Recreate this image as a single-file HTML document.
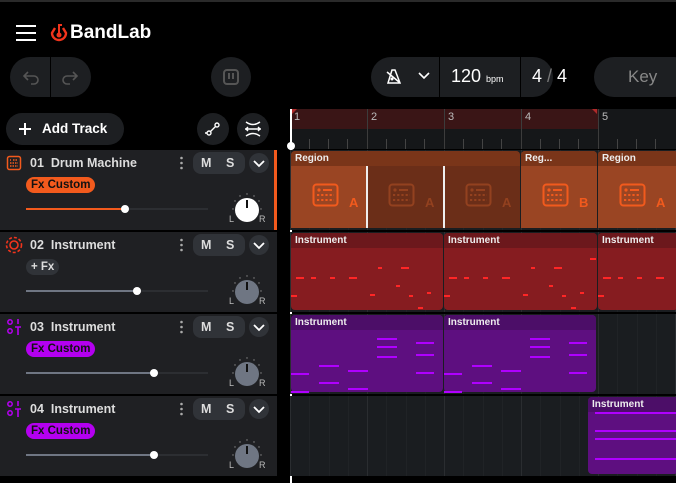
<!DOCTYPE html>
<html><head><meta charset="utf-8"><style>
*{box-sizing:border-box;margin:0;padding:0}
body{width:676px;height:483px;background:#000;position:relative;overflow:hidden;font-family:"Liberation Sans",sans-serif;color:#e8e8ea}
.a{position:absolute}
.pill{background:#1d1f22;border-radius:20px}
.trk{position:absolute;left:0;width:277px;height:80px;background:#1f2023}
.nm{position:absolute;left:30px;top:6px;font-size:12.5px;font-weight:bold;color:#ddd}
.dots{position:absolute;left:180px;top:6px;width:3px;height:14px}
.ms{position:absolute;left:193px;top:2px;width:52px;height:22px;background:#303338;border-radius:8px;font-size:12.5px;font-weight:bold;color:#ddd}
.ms span{position:absolute;top:4px}
.chev{position:absolute;left:249px;top:3px;width:20px;height:20px;border-radius:50%;background:#303338}
.badge{position:absolute;left:26px;top:27px;height:16px;border-radius:8px;padding:0 5px;font-size:11.5px;font-weight:bold;line-height:16px;color:#111}
.sl{position:absolute;left:26px;top:58px;width:182px;height:2px;background:#2c2e32}
.knob{position:absolute;left:235px;top:48px;width:24px;height:24px;border-radius:50%}
.knob:after{content:"";position:absolute;left:11px;top:2px;width:2px;height:8px;background:#111}
.lr{position:absolute;top:64px;font-size:9px;color:#bbb}
.grid{position:absolute;left:291px;width:385px;height:80px;background:#1a1d20}
.reg{position:absolute;border-radius:4px;overflow:hidden}
.rh{position:absolute;left:0;right:0;top:0;height:15px;font-size:10px;font-weight:bold;color:#eee;padding:2px 4px}
.n{position:absolute;height:2px}
</style></head><body>
<div class="a" style="left:0;top:0;width:676px;height:2px;background:#2a2a2a"></div>
<div class="a" style="left:16px;top:25px;width:20px;height:2px;background:#fff"></div>
<div class="a" style="left:16px;top:32px;width:20px;height:2px;background:#fff"></div>
<div class="a" style="left:16px;top:39px;width:20px;height:2px;background:#fff"></div>
<svg class="a" style="left:49px;top:22px" width="20" height="22" viewBox="0 0 20 22"><path d="M6 6 L3 11 A7 7 0 0 0 17 11 L14 6" stroke="#f2341c" stroke-width="2.4" fill="none"/><circle cx="10" cy="13" r="2.5" fill="#f2341c"/><path d="M10 13 V3 H13" stroke="#f2341c" stroke-width="2" fill="none"/></svg>
<div class="a" style="left:70px;top:22px;font-size:19px;font-weight:bold;color:#fff">BandLab</div>
<div class="a pill" style="left:10px;top:57px;width:81px;height:40px"></div>
<div class="a" style="left:50px;top:57px;width:1px;height:40px;background:#000"></div>
<svg class="a" style="left:22px;top:68px" width="18" height="18" viewBox="0 0 18 18"><path d="M6 4 L2 8 L6 12 M2 8 H12 A4 4 0 0 1 12 16 H9" stroke="#555" stroke-width="1.6" fill="none"/></svg>
<svg class="a" style="left:61px;top:68px" width="18" height="18" viewBox="0 0 18 18"><path d="M12 4 L16 8 L12 12 M16 8 H6 A4 4 0 0 0 6 16 H9" stroke="#555" stroke-width="1.6" fill="none"/></svg>
<div class="a pill" style="left:211px;top:57px;width:40px;height:40px"></div>
<div class="a" style="left:223px;top:69px;width:16px;height:16px;border:2px solid #555;border-radius:4px"></div>
<div class="a" style="left:228px;top:73px;width:2px;height:6px;background:#555"></div>
<div class="a" style="left:232px;top:73px;width:2px;height:6px;background:#555"></div>
<div class="a pill" style="left:371px;top:57px;width:182px;height:40px"></div>
<div class="a" style="left:439px;top:57px;width:1px;height:40px;background:#000"></div>
<div class="a" style="left:520px;top:57px;width:1px;height:40px;background:#000"></div>
<svg class="a" style="left:385px;top:68px" width="18" height="18" viewBox="0 0 18 18"><path d="M7 2 H10 L15 15 H3 Z M2 4 L14 14" stroke="#fff" stroke-width="1.5" fill="none"/><circle cx="7" cy="11" r="1.5" fill="#fff"/></svg>
<svg class="a" style="left:418px;top:72px" width="12" height="8" viewBox="0 0 12 8"><path d="M1 1 L6 6 L11 1" stroke="#fff" stroke-width="1.6" fill="none"/></svg>
<div class="a" style="left:451px;top:66px;font-size:18px;color:#fff">120 <span style="font-size:9px">bpm</span></div>
<div class="a" style="left:532px;top:66px;font-size:18px;color:#fff">4<span style="color:#777"> / </span>4</div>
<div class="a pill" style="left:594px;top:57px;width:100px;height:40px"></div>
<div class="a" style="left:628px;top:67px;font-size:17px;color:#888">Key</div>
<div class="a pill" style="left:6px;top:113px;width:118px;height:32px;border-radius:16px"></div>
<div class="a" style="left:19px;top:128px;width:12px;height:2px;background:#fff"></div>
<div class="a" style="left:24px;top:123px;width:2px;height:12px;background:#fff"></div>
<div class="a" style="left:42px;top:121px;font-size:13.5px;font-weight:bold;color:#fff">Add Track</div>
<div class="a pill" style="left:197px;top:113px;width:32px;height:32px;border-radius:50%"></div>
<svg class="a" style="left:203px;top:119px" width="20" height="20" viewBox="0 0 20 20"><circle cx="6" cy="14" r="2" stroke="#fff" fill="none" stroke-width="1.4"/><circle cx="14" cy="6" r="2" stroke="#fff" fill="none" stroke-width="1.4"/><path d="M7.5 12.5 L12.5 7.5 M2 14 H4" stroke="#fff" stroke-width="1.4"/></svg>
<div class="a pill" style="left:237px;top:113px;width:32px;height:32px;border-radius:50%"></div>
<svg class="a" style="left:243px;top:119px" width="20" height="20" viewBox="0 0 20 20"><path d="M3 3 Q10 8 17 3 M3 17 Q10 12 17 17 M2 10 H18 M5 8 L3 10 L5 12 M15 8 L17 10 L15 12" stroke="#fff" stroke-width="1.4" fill="none"/></svg>
<div class="a" style="left:291px;top:109px;width:307px;height:20px;background:#3a1516"></div>
<div class="a" style="left:598px;top:109px;width:78px;height:20px;background:#151719"></div>
<div class="a" style="left:291px;top:129px;width:385px;height:20px;background:#151719"></div>
<div class="a" style="left:291px;top:109px;width:0;height:0;border-top:6px solid #b02a2a;border-right:6px solid transparent"></div>
<div class="a" style="left:592px;top:109px;width:0;height:0;border-top:5px solid #b02a2a;border-left:5px solid transparent"></div>
<div id="ruler"></div>
<div class="a" style="left:290px;top:109px;width:2px;height:374px;background:#fff"></div>
<div class="a" style="left:287px;top:142px;width:8px;height:8px;border-radius:50%;background:#fff"></div>
<div class="trk" style="top:150px"></div>
<div class="a" style="left:274px;top:150px;width:3px;height:80px;background:#f25a1d"></div>
<div class="trk" style="top:232px"></div>
<div class="trk" style="top:314px"></div>
<div class="trk" style="top:396px"></div>
<div id="tl"></div>
<div class="grid" style="top:150px"></div>
<div class="grid" style="top:232px"></div>
<div class="grid" style="top:314px"></div>
<div class="grid" style="top:396px"></div>
<div id="gl"></div>
<div id="regs"></div>
<script>
var h='';
for(var b=0;b<5;b++){var x=290+b*77;h+='<div class="a" style="left:'+x+'px;top:109px;width:1px;height:40px;background:#3c3c3c"></div><div class="a" style="left:'+(x+4)+'px;top:111px;font-size:11px;color:#bbb">'+(b+1)+'</div>';for(var t=1;t<4;t++)h+='<div class="a" style="left:'+(x+t*19)+'px;top:139px;width:1px;height:10px;background:#444"></div>';}
document.getElementById('ruler').innerHTML=h;
var g='';for(var i=0;i<21;i++){var x=290+i*19.25;for(var r=0;r<4;r++)g+='<div class="a" style="left:'+Math.round(x)+'px;top:'+(150+r*82)+'px;width:1px;height:80px;background:'+(i%4==0?'#2a2d30':'#202326')+'"></div>';}
document.getElementById('gl').innerHTML=g;
var tr=[{y:150,n:'01&nbsp; Drum Machine',b:'Fx Custom',bc:'#f25a1d',sv:99,sc:'#f25a1d',kc:'#fff',ic:'drum'},{y:232,n:'02&nbsp; Instrument',b:'+ Fx',bc:'#303338',sv:111,sc:'#6f7683',kc:'#6f7683',ic:'inst'},{y:314,n:'03&nbsp; Instrument',b:'Fx Custom',bc:'#b400f0',sv:128,sc:'#6f7683',kc:'#6f7683',ic:'p'},{y:396,n:'04&nbsp; Instrument',b:'Fx Custom',bc:'#b400f0',sv:128,sc:'#6f7683',kc:'#6f7683',ic:'p'}];
var s='';tr.forEach(function(t){var y=t.y;s+='<div class="a" style="left:0;top:'+y+'px;width:277px;height:80px">';
if(t.ic=='drum')s+='<svg class="a" style="left:6px;top:5px" width="16" height="16"><rect x="1.5" y="1.5" width="13" height="13" rx="2" stroke="#f25a1d" stroke-width="1.5" fill="none"/><path d="M4 5h1M7 5h5M4 8h8M4 11h8" stroke="#f25a1d" stroke-width="1.5" stroke-dasharray="1.5 1"/></svg>';
else if(t.ic=='inst')s+='<svg class="a" style="left:5px;top:4px" width="18" height="18"><circle cx="9" cy="9" r="4" stroke="#f2341c" stroke-width="1.6" fill="none"/><circle cx="9" cy="9" r="7.5" stroke="#f2341c" stroke-width="1.6" fill="none" stroke-dasharray="3 2"/></svg>';
else s+='<svg class="a" style="left:6px;top:4px" width="16" height="18"><circle cx="4" cy="4" r="2.2" stroke="#b400f0" stroke-width="1.5" fill="none"/><circle cx="4" cy="13" r="2.2" stroke="#b400f0" stroke-width="1.5" fill="none"/><path d="M12 1v5M9 9h6M12 9v8" stroke="#b400f0" stroke-width="1.6"/></svg>';
s+='<div class="nm">'+t.n+'</div><svg class="dots" viewBox="0 0 3 14"><circle cx="1.5" cy="2" r="1.3" fill="#aaa"/><circle cx="1.5" cy="7" r="1.3" fill="#aaa"/><circle cx="1.5" cy="12" r="1.3" fill="#aaa"/></svg><div class="ms"><span style="left:8px">M</span><span style="left:33px">S</span></div><div class="chev"><svg width="20" height="20"><path d="M5 8l5 5 5-5" stroke="#fff" stroke-width="1.8" fill="none"/></svg></div>';
s+='<div class="badge" style="background:'+t.bc+';color:'+(t.b=='+ Fx'?'#ddd':'#111')+'">'+t.b+'</div>';
s+='<div class="sl"></div><div class="sl" style="width:'+t.sv+'px;background:'+t.sc+'"></div><div class="a" style="left:'+(26+t.sv-4)+'px;top:55px;width:8px;height:8px;border-radius:50%;background:#fff"></div>';
s+='<svg class="a" style="left:229px;top:42px" width="36" height="24"><g fill="#888"><circle cx="4" cy="17" r=".7"/><circle cx="6" cy="9" r=".7"/><circle cx="11" cy="4" r=".7"/><circle cx="18" cy="2" r=".7"/><circle cx="25" cy="4" r=".7"/><circle cx="30" cy="9" r=".7"/><circle cx="32" cy="17" r=".7"/></g></svg>';
s+='<div class="knob" style="background:'+t.kc+'"></div><div class="lr" style="left:229px">L</div><div class="lr" style="left:259px">R</div></div>';});
document.getElementById('tl').innerHTML=s;
var r='';
function reg(x,y,w,hh,bg,hd,lab){r+='<div class="reg" style="left:'+x+'px;top:'+y+'px;width:'+w+'px;height:'+hh+'px;background:'+bg+'"><div class="rh" style="background:'+hd+'">'+lab+'</div></div>';}
var d=[[291,76,'#9a4523','A'],[367,77,'#6b2e18','A'],[444,76,'#6b2e18','A'],[521,76,'#9a4523','B'],[598,78,'#9a4523','A']];
reg(291,151,229,77,'#6b2e18','#7a3519','Region');reg(521,151,76,77,'#9a4523','#7a3519','Reg...');reg(598,151,80,77,'#9a4523','#7a3519','Region');
d.forEach(function(e,i){var dim=e[2]=='#6b2e18';r+='<div class="a" style="left:'+e[0]+'px;top:166px;width:'+e[1]+'px;height:62px;background:'+e[2]+'"></div>';var c=dim?'#93411f':'#f25a1d';
r+='<svg class="a" style="left:'+(e[0]+21)+'px;top:183px" width="28" height="25"><rect x="1.5" y="1.5" width="24" height="21" rx="3" stroke="'+c+'" stroke-width="2" fill="none"/><circle cx="7" cy="7" r="1.6" fill="'+c+'"/><path d="M11 7h9" stroke="'+c+'" stroke-width="2"/><path d="M5 12h17M5 17h17" stroke="'+c+'" stroke-width="2" stroke-dasharray="2.2 2"/></svg><div class="a" style="left:'+(e[0]+58)+'px;top:195px;font-size:13px;font-weight:bold;color:'+c+'">'+e[3]+'</div>';
if(i==1||i==2)r+='<div class="a" style="left:'+(e[0]-1)+'px;top:166px;width:2px;height:62px;background:#eee"></div>';});
[[291,152],[444,153],[598,80]].forEach(function(e){reg(e[0],233,e[1],77,'#861c20','#6c181c','Instrument');
var notes=[[0,62,6],[5,44,8],[20,44,5],[39,44,5],[58,44,8],[79,61,5],[87,34,4],[105,52,4],[110,34,8],[118,62,4],[127,74,5],[136,59,4],[146,25,6]];
var o=[[0,82],[20,82],[39,82],[58,82]];notes.concat(o).forEach(function(n){if(n[0]+n[2]<e[1])r+='<div class="n" style="left:'+(e[0]+n[0])+'px;top:'+(233+n[1])+'px;width:'+(n[2]||5)+'px;background:#ff2626"></div>';});});
[[291,152],[444,152]].forEach(function(e){reg(e[0],315,e[1],77,'#5e0f80','#4c0e68','Instrument');
[[0,58,18],[0,76,18],[28,50,20],[28,67,20],[57,55,20],[57,73,20],[86,23,20],[86,31,20],[86,41,20],[125,27,18],[125,39,18],[125,57,18]].forEach(function(n){r+='<div class="n" style="left:'+(e[0]+n[0])+'px;top:'+(315+n[1])+'px;width:'+n[2]+'px;background:#b000ff"></div>';});});
reg(588,397,90,77,'#5e0f80','#4c0e68','Instrument');
[15,33,41,61].forEach(function(t){r+='<div class="n" style="left:595px;top:'+(397+t)+'px;width:81px;background:#b000ff"></div>';});
document.getElementById('regs').innerHTML=r;
</script>
</body></html>
